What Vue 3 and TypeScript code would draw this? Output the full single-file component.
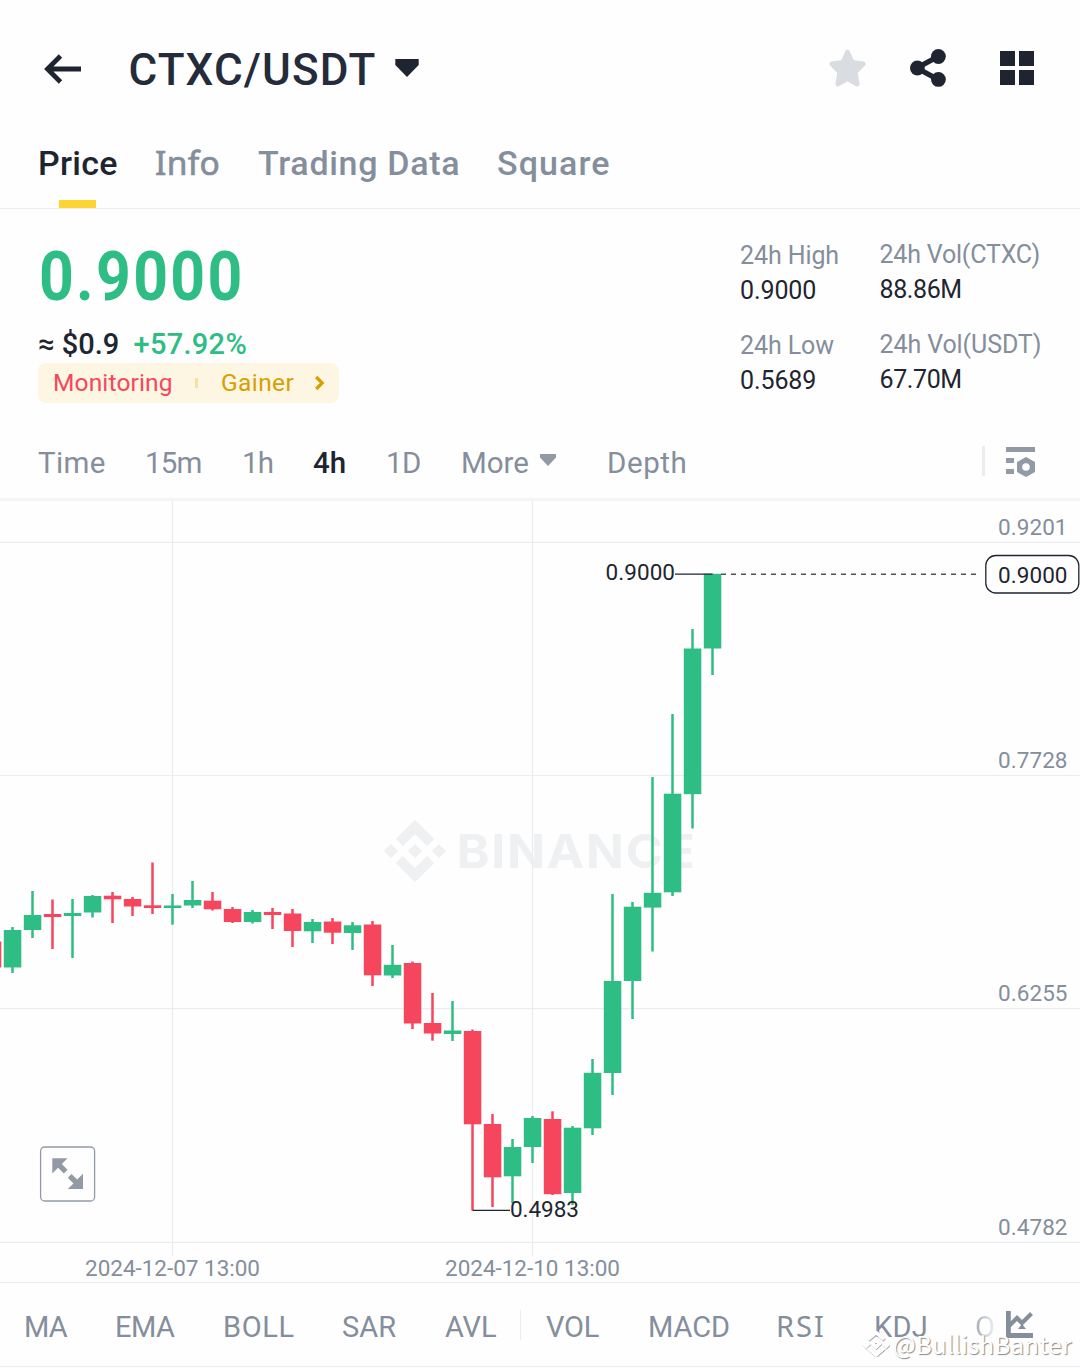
<script setup lang="ts">
interface Label { text: string; width: number; spacing: number; wide?: boolean; active?: boolean }
interface Candle { x: number; top: number; bottom: number; high: number; low: number; up: boolean }

const tabs: Label[] = [
  { text: 'Price', width: 117, spacing: 0.3, active: true },
  { text: 'Info', width: 103, spacing: 0.3, wide: true },
  { text: 'Trading Data', width: 239, spacing: 0.7 },
  { text: 'Square', width: 130, spacing: 1.1 },
]

const intervals: Label[] = [
  { text: 'Time', width: 107, spacing: 0.4 },
  { text: '15m', width: 97, spacing: -0.8 },
  { text: '1h', width: 71, spacing: -0.8 },
  { text: '4h', width: 73, spacing: 0, active: true },
  { text: '1D', width: 75, spacing: -0.5 },
  { text: 'More', width: 79, spacing: 0 },
]

const stats = [
  { label: '24h High', value: '0.9000', spacing: -0.1 },
  { label: '24h Low', value: '0.5689', spacing: -0.1 },
]
const volumes = [
  { label: '24h Vol(CTXC)', value: '88.86M', spacing: -0.2 },
  { label: '24h Vol(USDT)', value: '67.70M', spacing: -0.1 },
]

const overlays: Label[] = [
  { text: 'MA', width: 91, spacing: -0.8 },
  { text: 'EMA', width: 108, spacing: -0.5 },
  { text: 'BOLL', width: 119, spacing: 0.6 },
  { text: 'SAR', width: 103, spacing: 0 },
  { text: 'AVL', width: 74, spacing: -0.1 },
]
const oscillators: Label[] = [
  { text: 'VOL', width: 102, spacing: -0.2 },
  { text: 'MACD', width: 128, spacing: -0.1 },
  { text: 'RSI', width: 98, spacing: 2, wide: true },
  { text: 'KDJ', width: 101, spacing: 0.3 },
]

// [body top, body bottom, high, low, rising]
const rows: [number, number, number, number, number][] = [
  [941.5, 967.5, 941.5, 967.5, 0],
  [930, 967.5, 927, 973, 1], [915, 930, 891, 938, 1], [914, 917, 899.5, 949, 0],
  [913, 916, 899, 958, 1], [896, 912.5, 895, 917.5, 1], [895.7, 899.3, 892, 923, 0],
  [899, 906.5, 897, 916, 0], [905.3, 908, 862.5, 914, 0], [905.5, 908, 894, 924.7, 1],
  [900, 905.5, 881, 908, 1], [900.7, 909.3, 892, 910.5, 0], [909, 922, 907, 923, 0],
  [912, 922, 910, 923.5, 1], [912, 915, 908, 929, 0], [913.5, 931, 909, 947, 0],
  [922, 931.3, 919, 943, 1], [921.5, 932.7, 918, 944, 0], [925.3, 933, 922, 950, 1],
  [924.5, 975.3, 921, 986, 0], [964.8, 975.5, 945, 978, 1], [963, 1023.5, 961.5, 1029, 0],
  [1023, 1033.5, 993, 1040.7, 0], [1030.5, 1034, 1001, 1041, 1], [1031, 1124.3, 1029.5, 1210.5, 0],
  [1124, 1177.3, 1114, 1207, 0], [1147, 1176.3, 1139, 1203, 1], [1118, 1147, 1116, 1163, 1],
  [1119, 1194.2, 1111.3, 1195, 0], [1127.7, 1193, 1126, 1205, 1], [1072.8, 1128.3, 1059, 1135, 1],
  [981, 1073, 894, 1095, 1], [906.7, 981, 902, 1019, 1], [892.8, 907.6, 777, 951.5, 1],
  [793.7, 892.3, 714, 896, 1], [648.5, 794.2, 629, 828.5, 1], [573.8, 648.5, 573.8, 675, 1],
]
const candles: Candle[] = rows.map(([top, bottom, high, low, up], i) => ({
  x: -7.5 + i * 20, top, bottom, high, low, up: up === 1,
}))

const priceLines = [
  { y: 542.3, text: '0.9201' }, { y: 775.5, text: '0.7728' },
  { y: 1008.7, text: '0.6255' }, { y: 1242.3, text: '0.4782' },
]
const dateLines = [
  { x: 172.5, text: '2024-12-07 13:00' }, { x: 532.5, text: '2024-12-10 13:00' },
]
</script>

<template>
  <main class="page">
    <header class="top">
      <svg class="back" width="38" height="32" viewBox="0 0 38 32">
        <path d="M17.500 3 4.500 16l13 13M4.500 16H38" fill="none" stroke="#1e2530" stroke-width="4.8" />
      </svg>
      <h1>CTXC/USDT</h1>
      <svg class="caret" width="24" height="18" viewBox="0 0 24 18"><path d="M.3 0h23.4v6L12 18 .3 6z" fill="#1e2530" /></svg>
      <div class="actions">
        <svg width="38" height="40" viewBox="0 0 38 40">
          <path d="m19.500 4 4.600 10.300 11.200 1.600-8 8.200 2 12.100-9.800-5.500-9.800 5.500 2-12.100-8-8.200 11.200-1.600z" fill="#d9dce1" stroke="#d9dce1" stroke-width="4.600" stroke-linejoin="round" />
        </svg>
        <svg class="share" width="38" height="40" viewBox="0 0 38 40">
          <path d="M29 8.5 8 20l21 11.5" fill="none" stroke="#1e2530" stroke-width="5.4" />
          <g fill="#1e2530"><circle cx="29.4" cy="8.5" r="7.4" /><circle cx="8.4" cy="20" r="7.4" /><circle cx="29.4" cy="31.4" r="7.4" /></g>
        </svg>
        <svg width="34" height="34" viewBox="0 0 34 34"><path d="M0 0h15v15H0zM19 0h15v15H19zM0 19h15v15H0zM19 19h15v15H19z" fill="#1e2530" /></svg>
      </div>
    </header>

    <nav class="tabs">
      <a v-for="t in tabs" :key="t.text" :class="{ active: t.active, wide: t.wide }" :style="{ width: t.width + 'px', letterSpacing: t.spacing + 'px' }">{{ t.text }}</a>
    </nav>

    <section class="summary">
      <div class="quote">
        <div class="price">0.9000</div>
        <div class="change"><span>≈ $0.9</span><span class="pct">+57.92%</span></div>
        <div class="badge">
          <span class="monitoring">Monitoring</span>
          <i></i>
          <span class="gainer">Gainer</span>
          <svg width="12" height="16" viewBox="0 0 12 16"><path d="m2.2 2 6 6-6 6" fill="none" stroke="#d89f00" stroke-width="3.2" /></svg>
        </div>
      </div>
      <div class="stats first">
        <dl v-for="s in stats" :key="s.label"><dt :style="{ letterSpacing: s.spacing + 'px' }">{{ s.label }}</dt><dd>{{ s.value }}</dd></dl>
      </div>
      <div class="stats volume">
        <dl v-for="s in volumes" :key="s.label"><dt :style="{ letterSpacing: s.spacing + 'px' }">{{ s.label }}</dt><dd>{{ s.value }}</dd></dl>
      </div>
    </section>

    <nav class="intervals">
      <a v-for="t in intervals" :key="t.text" :class="{ active: t.active }" :style="{ width: t.width + 'px', letterSpacing: t.spacing + 'px' }">{{ t.text }}</a>
      <svg class="more" width="16" height="12" viewBox="0 0 16 12"><path d="M0 0h16v3.5L8 12 0 3.5z" fill="#929aa5" /></svg>
      <a class="depth">Depth</a>
      <i></i>
      <svg width="30" height="30" viewBox="0 0 30 30">
        <path d="M0 0h29v5H0zM0 11h8v5H0zM0 22h8v5H0z" fill="#929aa5" />
        <path d="m20 10 9 5v10l-9 5-9-5V15z" fill="#929aa5" /><circle cx="20" cy="20" r="3.8" fill="#fefefe" />
      </svg>
    </nav>

    <svg class="chart" width="1080" height="781" viewBox="0 501 1080 781">
      <g fill="#eff0f2">
        <path d="m415 820 19.2 19-7 7L415 834l-12.2 12-7-7zM415 882l19.2-19-7-7L415 868l-12.2-12-7 7zM415 844l7 7-7 7-7-7zM391 844l7 7-7 7-7-7zM439 844l7 7-7 7-7-7z" />
        <text class="brand" x="456.500" y="868" textLength="240" lengthAdjust="spacingAndGlyphs">BINANCE</text>
      </g>
      <g stroke="#ebecef" stroke-width="1.2">
        <line v-for="l in priceLines" :key="l.y" x1="0" x2="1080" :y1="l.y" :y2="l.y" />
        <line v-for="l in dateLines" :key="l.x" :x1="l.x" :x2="l.x" y1="501" y2="1256" />
      </g>
      <g class="axis">
        <text v-for="l in priceLines" :key="l.y" x="998" :y="l.y - 7.3" textLength="69.500">{{ l.text }}</text>
        <text v-for="l in dateLines" :key="l.x" :x="l.x - 87.5" y="1276" textLength="175">{{ l.text }}</text>
      </g>
      <g v-for="c in candles" :key="c.x" :fill="c.up ? '#2ebd85' : '#f6465d'">
        <rect :x="c.x - 1.25" :y="c.high" width="2.5" :height="c.low - c.high" />
        <rect :x="c.x - 8.7" :y="c.top" width="17.5" :height="c.bottom - c.top" />
      </g>
      <g fill="none" stroke="#1e2530" stroke-width="1.3">
        <path d="M675 574.100h37.5M472.5 1210.3H510" />
        <path d="M721 574.2h255" stroke-dasharray="5 5" stroke="#4c525b" stroke-width="1.500" />
        <rect x="985.8" y="555.5" width="93" height="37.5" rx="10" fill="#fefefe" />
      </g>
      <g class="axis dark">
        <text x="605.500" y="580" textLength="69.500">0.9000</text>
        <text x="998" y="583" textLength="69.500">0.9000</text>
        <text x="510" y="1217" textLength="69">0.4983</text>
      </g>
      <rect x="40.6" y="1147" width="54" height="54" rx="4" fill="none" stroke="#929aa5" stroke-width="1.3" />
      <path d="M52.300 1158.300h15.200l-5.700 5.700 5.700 5.700-3.700 3.800-5.700-5.700-5.800 5.800zM83 1189.100H67.800l5.700-5.700-5.700-5.700 3.700-3.800 5.700 5.700 5.800-5.800z" fill="#929aa5" />
    </svg>

    <footer class="indicators">
      <a v-for="t in overlays" :key="t.text" :style="{ width: t.width + 'px', letterSpacing: t.spacing + 'px' }">{{ t.text }}</a>
      <i></i>
      <a v-for="t in oscillators" :key="t.text" :class="{ wide: t.wide }" :style="{ width: t.width + 'px', letterSpacing: t.spacing + 'px' }">{{ t.text }}</a>
      <a class="fade">O</a>
      <svg width="28" height="28" viewBox="0 0 28 28">
        <path d="M0 0h4.800v22H27v5H0z" fill="#848e9c" />
        <path d="m3 15 8-8 5 5 9.500-9.500" fill="none" stroke="#848e9c" stroke-width="4.200" />
        <path d="m16 13 4 5h-8z" fill="#848e9c" />
      </svg>
      <div class="credit">
        <svg width="28" height="26" viewBox="0 0 28 26">
          <g fill="none" stroke-width="3.600">
            <path d="m6 8.500 8-7 8 7M6 17l8 7 8-7M1 12.500l3 3 3-3M21 12.500l3 3 3-3M10.500 12.500l3.500 3.500 3.500-3.500-3.500-3z" stroke="#aaa" transform="translate(.6 .8)" />
            <path d="m6 8.500 8-7 8 7M6 17l8 7 8-7M1 12.500l3 3 3-3M21 12.500l3 3 3-3M10.500 12.500l3.500 3.500 3.500-3.500-3.500-3z" stroke="#fff" />
          </g>
        </svg>
        <span>@BullishBanter</span>
      </div>
    </footer>
  </main>
</template>

<style>
body { margin: 0; background: #fefefe; }
</style>

<style scoped>
* { box-sizing: border-box; }
.page { width: 1080px; height: 1368px; overflow: hidden; background: #fefefe; color: #1e2530; font-family: Roboto, "Noto Sans", sans-serif; }
.wide { font-family: "Noto Sans", sans-serif; }
svg { display: block; flex: none; }
a { flex: none; white-space: nowrap; }
.top { height: 140px; display: flex; align-items: center; padding-left: 43px; padding-right: 46px; }
.back { margin-top: -3px; }
h1 { margin: 0 0 0 47.5px; width: 266.5px; font-size: 44px; line-height: 60px; font-weight: 500; letter-spacing: 1.1px; color: #242c3b; white-space: nowrap; }
.caret { margin-top: -4px; }
.actions { margin: -4px 0 0 auto; display: flex; align-items: center; }
.share { margin: 0 53px 0 43px; }
.tabs { height: 69px; display: flex; align-items: baseline; padding-left: 38px; border-bottom: 1px solid #ebecee; font-size: 34px; line-height: 45px; font-weight: 500; color: #848e9c; }
.tabs .wide { font-size: 33.5px; font-weight: 400; -webkit-text-stroke: .7px #848e9c; }
.tabs .active { color: #1e2530; }
.tabs .active::after { content: ""; display: block; width: 37px; height: 8px; margin: 14px 0 0 21px; background: #fcd535; }
.summary { height: 218px; display: flex; }
.quote { width: 740px; flex: none; padding: 28px 0 0 38px; }
.price { height: 80px; line-height: 80px; font-size: 69px; font-weight: 700; color: #2ebd85; letter-spacing: 2.6px; transform: translateX(1px) scaleX(.88); transform-origin: left; }
.change { margin-top: 9px; height: 36px; line-height: 36px; font-size: 29px; font-weight: 500; display: flex; }
.change span { width: 95.5px; white-space: nowrap; }
.change .pct { color: #2ebd85; letter-spacing: .3px; }
.badge { margin-top: 1px; width: 301px; height: 40px; line-height: 40px; border-radius: 8px; background: #fdf6e3; display: flex; align-items: center; padding-left: 15px; font-size: 24.5px; }
.monitoring { width: 142px; color: #f6465d; letter-spacing: .15px; }
.badge i { width: 3px; height: 10px; background: #f6e2a0; }
.gainer { margin-left: 23px; width: 92.500px; color: #d89f00; letter-spacing: .4px; }
.stats { padding-top: 28px; }
.stats.first { width: 139.500px; flex: none; padding-top: 29px; }
dl { margin: 0 0 20px; font-size: 25px; line-height: 35px; white-space: nowrap; }
dl dt { color: #848e9c; }
dl dd { margin: 0; letter-spacing: -.1px; }
.volume dd { letter-spacing: -.4px; }
.intervals { height: 74px; display: flex; align-items: center; padding-left: 38px; border-bottom: 3px solid #f5f5f5; font-size: 29.5px; color: #848e9c; }
.intervals .active { color: #1e2530; font-weight: 500; }
.more { margin-top: -5px; }
.intervals .depth { margin-left: 51px; letter-spacing: .6px; width: 375px; }
.intervals i { width: 3px; height: 30px; background: #eaecef; margin-right: 20.500px; margin-top: -3px; }
.intervals svg:last-child { margin-top: -2px; }
.axis { font-size: 22.5px; fill: #848e9c; }
.dark { fill: #1e2530; }
.brand { font: 700 46.5px Inter, sans-serif; letter-spacing: 1.5px; }
.indicators { position: relative; height: 85px; display: flex; align-items: center; padding-left: 24px; padding-top: 4px; border-top: 1px solid #ebecee; border-bottom: 1px solid #ebecee; font-size: 29px; line-height: 40px; color: #848e9c; }
.indicators > .wide { margin-top: -1px; }
.indicators i { width: 1px; height: 30px; background: #eaecef; margin: -4px 25px 0 1px; }
.fade { width: 31px; background: linear-gradient(90deg, #a4acb7, #eff0f2 20px); background-clip: text; color: transparent; }
.indicators > svg { margin-top: -4px; }
.credit { position: absolute; left: 862px; top: 46px; display: flex; align-items: center; }
.credit span { margin-left: 3px; font: 24px/30px "Noto Sans CJK SC", "Noto Sans", sans-serif; letter-spacing: .3px; color: #fff; text-shadow: 1px 1px 1px #888; white-space: nowrap; }
</style>
